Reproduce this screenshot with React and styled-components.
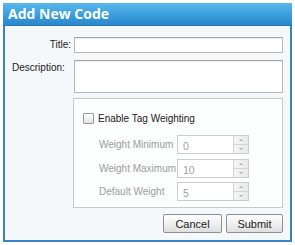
import React from "react";
import styled, { createGlobalStyle } from "styled-components";

const Global = createGlobalStyle`
  html, body { margin: 0; padding: 0; background: #ffffff; }
  body { font-family: "Liberation Sans", Arial, sans-serif; }
  * { box-sizing: border-box; }
`;

const Dialog = styled.div`
  margin: 3px 0 0 3px;
  width: 289px;
  height: 239px;
  border: 2px solid #3784c6;
  border-top-width: 0;
  background: #f4f8fb;
  display: flex;
  flex-direction: column;
`;

const TitleBar = styled.div`
  height: 23px;
  margin: 0 -2px;
  padding: 0 0 0 5px;
  background: linear-gradient(#58b8ec, #3a9ddd 55%, #2a87cc);
  border-bottom: 1px solid #2576b8;
  color: #ffffff;
  font-family: "Open Sans", "DejaVu Sans", sans-serif;
  font-weight: bold;
  font-size: 14px;
  line-height: 22px;
`;

const Body = styled.div`
  flex: 1;
  padding: 11px 7px 0 3px;
  display: flex;
  flex-direction: column;
`;

const FormGrid = styled.div`
  display: grid;
  grid-template-columns: 63px 1fr;
  column-gap: 3px;
  row-gap: 7px;
  align-items: start;
`;

const Label = styled.label`
  font-size: 10px;
  color: #222;
  white-space: nowrap;
  text-align: ${(p) => (p.$left ? "left" : "right")};
  padding: ${(p) => (p.$left ? "2px 0 0 4px" : "2px 0 0 0")};
  line-height: 12px;
`;

const TextInput = styled.div`
  height: 16px;
  background: #fff;
  border: 1px solid #b9b9b9;
  border-top-color: #a4a4a4;
  box-shadow: inset 0 1px 1px rgba(0,0,0,0.08);
`;

const TextArea = styled(TextInput)`
  height: 33px;
`;

const Panel = styled.div`
  margin: 5px 0 0 65px;
  height: 110px;
  border: 1px solid #c9c9c9;
  background: #fcfdfd;
  padding: 13px 0 0 9px;
  display: flex;
  flex-direction: column;
`;

const CheckRow = styled.div`
  display: flex;
  align-items: center;
  gap: 4px;
  font-size: 10px;
  color: #222;
  height: 12px;
  white-space: nowrap;
`;

const Check = styled.span`
  width: 11px;
  height: 11px;
  border: 1px solid #9a9a9a;
  background: linear-gradient(#fdfdfd, #e4e4e4);
  border-radius: 1px;
`;

const Rows = styled.div`
  margin-top: 11px;
  padding-left: 16px;
  display: flex;
  flex-direction: column;
  gap: 4.5px;
`;

const Row = styled.div`
  display: grid;
  grid-template-columns: 78px 72px;
  align-items: center;
  font-size: 10px;
  color: #9c9c9c;
  height: 19px;
  white-space: nowrap;
`;

const Spin = styled.div`
  height: 19px;
  display: flex;
  border: 1px solid #cdcdcd;
  background: #fff;
`;

const SpinValue = styled.span`
  flex: 1;
  padding: 4px 0 0 5px;
  font-size: 10.5px;
  color: #a0a0a0;
`;

const SpinButtons = styled.div`
  width: 15px;
  border-left: 1px solid #d3d3d3;
  display: flex;
  flex-direction: column;
  background: linear-gradient(90deg, #f4f4f4, #e9e9e9);
`;

const SpinHalf = styled.div`
  flex: 1;
  display: flex;
  align-items: center;
  justify-content: center;
  & + & { border-top: 1px solid #d3d3d3; }
`;

const Arrow = styled.span`
  width: 0;
  height: 0;
  border-left: 2px solid transparent;
  border-right: 2px solid transparent;
  ${(p) => (p.$up ? "border-bottom: 2px solid #aaa;" : "border-top: 2px solid #aaa;")}
`;

const ButtonRow = styled.div`
  margin-top: 6px;
  display: flex;
  justify-content: flex-end;
  gap: 4px;
`;

const Button = styled.button`
  width: ${(p) => p.$w}px;
  height: 19px;
  padding: 0;
  font-family: "Liberation Sans", Arial, sans-serif;
  font-size: 11px;
  color: #222;
  border: 1px solid #8f8f8f;
  border-radius: 2px;
  background: linear-gradient(#fefefe, #f0f0f0 50%, #dedede);
`;

function SpinBox({ value }) {
  return (
    <Spin>
      <SpinValue>{value}</SpinValue>
      <SpinButtons>
        <SpinHalf><Arrow $up /></SpinHalf>
        <SpinHalf><Arrow /></SpinHalf>
      </SpinButtons>
    </Spin>
  );
}

export default function App() {
  return (
    <>
      <Global />
      <Dialog>
        <TitleBar>Add New Code</TitleBar>
        <Body>
          <FormGrid>
            <Label>Title:</Label>
            <TextInput />
            <Label $left>Description:</Label>
            <TextArea />
          </FormGrid>
          <Panel>
            <CheckRow>
              <Check />
              <span>Enable Tag Weighting</span>
            </CheckRow>
            <Rows>
              <Row><span>Weight Minimum</span><SpinBox value="0" /></Row>
              <Row><span>Weight Maximum</span><SpinBox value="10" /></Row>
              <Row><span>Default Weight</span><SpinBox value="5" /></Row>
            </Rows>
          </Panel>
          <ButtonRow>
            <Button $w={59}>Cancel</Button>
            <Button $w={57}>Submit</Button>
          </ButtonRow>
        </Body>
      </Dialog>
    </>
  );
}
